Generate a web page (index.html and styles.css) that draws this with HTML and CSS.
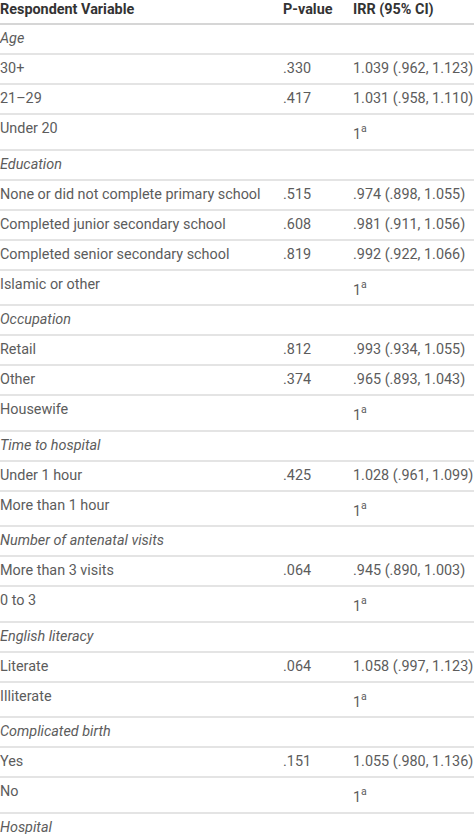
FILE: index.html
```html
<!DOCTYPE html>
<html lang="en">
<head>
<meta charset="utf-8">
<title>IRR table</title>
<link rel="stylesheet" href="styles.css">
</head>
<body>
<table class="irr-table">
  <colgroup>
    <col class="c-var">
    <col class="c-p">
    <col class="c-irr">
  </colgroup>
  <thead>
    <tr><th>Respondent Variable</th><th>P-value</th><th>IRR (95% CI)</th></tr>
  </thead>
  <tbody>
    <tr class="group"><td colspan="3">Age</td></tr>
    <tr><td>30+</td><td>.330</td><td>1.039 (.962, 1.123)</td></tr>
    <tr><td>21–29</td><td>.417</td><td>1.031 (.958, 1.110)</td></tr>
    <tr><td>Under 20</td><td></td><td>1<sup>a</sup></td></tr>
    <tr class="group"><td colspan="3">Education</td></tr>
    <tr><td>None or did not complete primary school</td><td>.515</td><td>.974 (.898, 1.055)</td></tr>
    <tr><td>Completed junior secondary school</td><td>.608</td><td>.981 (.911, 1.056)</td></tr>
    <tr><td>Completed senior secondary school</td><td>.819</td><td>.992 (.922, 1.066)</td></tr>
    <tr><td>Islamic or other</td><td></td><td>1<sup>a</sup></td></tr>
    <tr class="group"><td colspan="3">Occupation</td></tr>
    <tr><td>Retail</td><td>.812</td><td>.993 (.934, 1.055)</td></tr>
    <tr><td>Other</td><td>.374</td><td>.965 (.893, 1.043)</td></tr>
    <tr><td>Housewife</td><td></td><td>1<sup>a</sup></td></tr>
    <tr class="group"><td colspan="3">Time to hospital</td></tr>
    <tr><td>Under 1 hour</td><td>.425</td><td>1.028 (.961, 1.099)</td></tr>
    <tr><td>More than 1 hour</td><td></td><td>1<sup>a</sup></td></tr>
    <tr class="group"><td colspan="3">Number of antenatal visits</td></tr>
    <tr><td>More than 3 visits</td><td>.064</td><td>.945 (.890, 1.003)</td></tr>
    <tr><td>0 to 3</td><td></td><td>1<sup>a</sup></td></tr>
    <tr class="group"><td colspan="3">English literacy</td></tr>
    <tr><td>Literate</td><td>.064</td><td>1.058 (.997, 1.123)</td></tr>
    <tr><td>Illiterate</td><td></td><td>1<sup>a</sup></td></tr>
    <tr class="group"><td colspan="3">Complicated birth</td></tr>
    <tr><td>Yes</td><td>.151</td><td>1.055 (.980, 1.136)</td></tr>
    <tr><td>No</td><td></td><td>1<sup>a</sup></td></tr>
    <tr class="group"><td colspan="3">Hospital</td></tr>
  </tbody>
</table>
</body>
</html>
```

FILE: styles.css
```css
html, body {
  margin: 0;
  padding: 0;
  background: #ffffff;
  overflow-x: hidden;
}

body {
  font-family: Roboto, "Liberation Sans", sans-serif;
  font-size: 14.4px;
  color: #5c5c5c;
}

.irr-table {
  border-collapse: collapse;
  table-layout: fixed;
  width: 500px;
}

.c-var { width: 283px; }
.c-p { width: 70px; }
.c-irr { width: 147px; }

.irr-table th,
.irr-table td {
  padding: 4px 0 4px 0;
  line-height: 20px;
  text-align: left;
  vertical-align: top;
  white-space: nowrap;
  overflow: hidden;
}

.irr-table th {
  font-weight: bold;
  color: #333333;
  padding-top: 0;
  padding-bottom: 3px;
  border-bottom: 2px solid #d6d6d6;
}

.irr-table td {
  border-bottom: 2px solid #e4e4e4;
}

.irr-table .group td {
  font-style: italic;
}

.irr-table sup {
  font-size: 10.5px;
  line-height: 20px;
  vertical-align: 6.5px;
}
```
